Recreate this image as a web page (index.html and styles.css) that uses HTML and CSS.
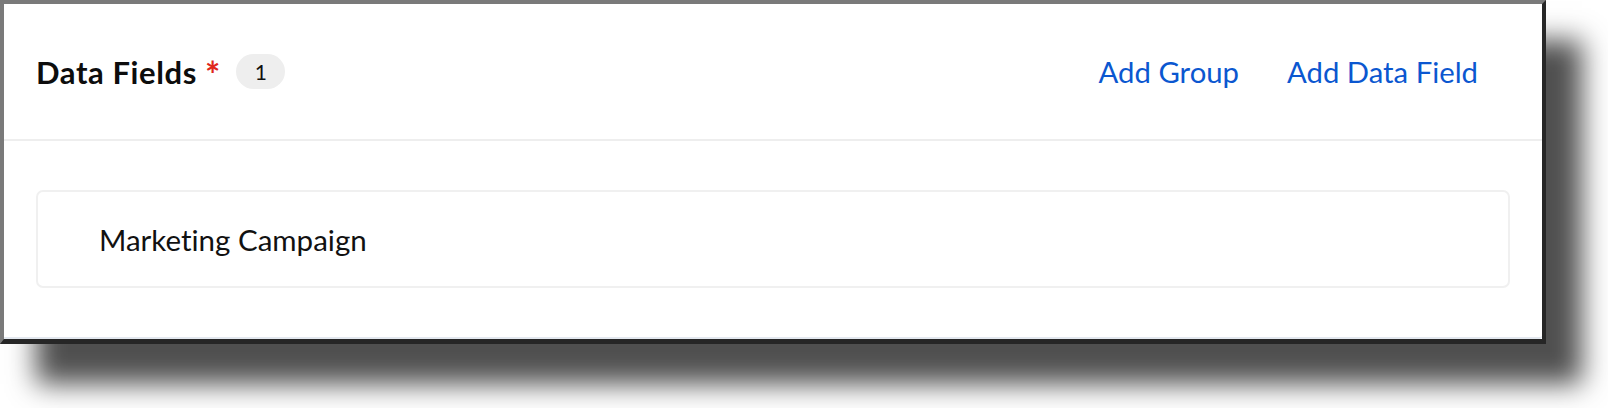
FILE: index.html
```html
<!DOCTYPE html>
<html lang="en">
<head>
    <meta charset="UTF-8">
    <meta name="viewport" content="width=device-width, initial-scale=1.0">
    <title>Data Fields</title>
    <link rel="stylesheet" href="styles.css">
</head>
<body>
    <!-- Window frame -->
    <div class="window">
        <div class="panel">
            <!-- Header -->
            <div class="panel-header">
                <div class="title">
                    <h2>Data Fields</h2>
                    <span class="required">*</span>
                    <span class="count">1</span>
                </div>
                <div class="actions">
                    <a href="#">Add Group</a>
                    <a href="#">Add Data Field</a>
                </div>
            </div>

            <!-- Groups -->
            <div class="panel-body">
                <div class="group-card">
                    <span class="group-name">Marketing Campaign</span>
                </div>
            </div>
        </div>
    </div>
</body>
</html>
```

FILE: styles.css
```css
/* Global Styles */
html {
    background-color: #fff;
}

body {
    font-family: Lato, "Liberation Sans", sans-serif;
    font-variant-ligatures: none;
    margin: 0;
    padding: 0 0 64px 0;
    min-height: 344px;
    background-color: #fff;
    color: #111;
}

/* Window frame with drop shadow */
.window {
    width: 1538px;
    border-left: 4px solid #7a7a7a;
    border-top: 4px solid #7a7a7a;
    border-right: 4px solid #262626;
    border-bottom: 5px solid #262626;
    box-shadow: 36px 40px 26px rgba(0, 0, 0, 0.69);
}

.panel {
    background-color: #fff;
    border-bottom: 2px solid #e3e8ef;
    border-bottom-right-radius: 3px;
}

/* Header */
.panel-header {
    display: flex;
    justify-content: space-between;
    align-items: center;
    height: 135px;
    padding: 0 64px 0 32px;
    border-bottom: 2px solid #eeeeee;
}

.title {
    display: flex;
    align-items: center;
}

.title h2 {
    margin: 0;
    font-size: 31px;
    font-weight: 700;
    letter-spacing: 0.6px;
    color: #0d0d0d;
}

.required {
    color: #e0261b;
    font-size: 36px;
    font-weight: 700;
    margin-left: 8px;
    margin-top: 4px;
}

.count {
    display: inline-flex;
    justify-content: center;
    align-items: center;
    width: 49px;
    height: 35px;
    margin-left: 16px;
    border-radius: 18px;
    background-color: #eeeeee;
    font-size: 21px;
    color: #111;
}

.actions {
    display: flex;
    gap: 48px;
}

.actions a {
    color: #0b57d0;
    text-decoration: none;
    font-size: 29.3px;
}

/* Body */
.panel-body {
    padding: 49px 32px;
}

.group-card {
    display: flex;
    align-items: center;
    height: 94px;
    padding-left: 61px;
    border: 2px solid #f0f0f0;
    border-radius: 7px;
}

.group-name {
    font-size: 29.5px;
    color: #111;
}
```
